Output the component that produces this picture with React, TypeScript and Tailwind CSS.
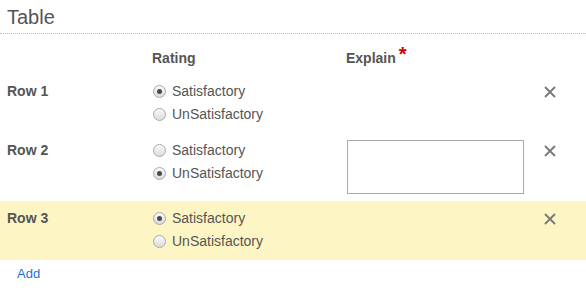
import React from "react";

function Radio({ checked, label }: { checked: boolean; label: string }) {
  return (
    <div className="flex items-center h-[23px]">
      <span className="ml-[1px] w-[13px] h-[13px] rounded-full border border-[#a9a9a9] bg-gradient-to-b from-[#fafafa] to-[#dcdcdc] flex items-center justify-center">
        {checked && <span className="w-[5px] h-[5px] rounded-full bg-[#4a4a4a]" />}
      </span>
      <span className="ml-[6px] text-[14px] text-[#555]">{label}</span>
    </div>
  );
}

function XIcon() {
  return (
    <svg width="12" height="12" viewBox="0 0 12 12" className="block">
      <path d="M1 1 L11 11 M11 1 L1 11" stroke="#777" strokeWidth="1.8" />
    </svg>
  );
}

function Row({
  name,
  sat,
  explain,
  highlight,
}: {
  name: string;
  sat: boolean;
  explain?: boolean;
  highlight?: boolean;
}) {
  return (
    <div className={`flex items-start pt-[6px] pb-[7px] ${highlight ? "bg-[#fdf5c4]" : ""}`}>
      <div className="w-[152px] pl-[7px] h-[23px] flex items-center font-bold text-[14px] text-[#555]">{name}</div>
      <div className="w-[194px] flex flex-col">
        <Radio checked={sat} label="Satisfactory" />
        <Radio checked={!sat} label="UnSatisfactory" />
      </div>
      <div className="w-[198px]">
        {explain && (
          <div className="mt-[1px] ml-[1px] w-[177px] h-[54px] border border-[#aaa] bg-white" />
        )}
      </div>
      <div className="h-[23px] flex items-center">
        <XIcon />
      </div>
    </div>
  );
}

export default function App() {
  return (
    <div className="w-[586px] h-[288px] bg-white overflow-hidden" style={{ fontFamily: '"Liberation Sans", Arial, sans-serif' }}>
      <div className="pl-[7px] pt-[5px] h-[33px] text-[20px] leading-[24px] text-[#555]">Table</div>
      <div className="border-t border-dotted border-[#bbb]" />
      <div className="flex items-center pt-[13px] pb-[5px] h-[40px]">
        <div className="w-[152px]" />
        <div className="w-[194px] font-bold text-[14px] text-[#555]">Rating</div>
        <div className="font-bold text-[14px] text-[#555] flex items-start">
          Explain<span className="text-[#c00] text-[20px] leading-[16px] ml-[3px] mt-[-2px]">*</span>
        </div>
      </div>
      <Row name="Row 1" sat={true} />
      <Row name="Row 2" sat={false} explain />
      <Row name="Row 3" sat={true} highlight />
      <div className="pl-[17px] pt-[4px] text-[13px] text-[#1a73d9]">Add</div>
    </div>
  );
}
